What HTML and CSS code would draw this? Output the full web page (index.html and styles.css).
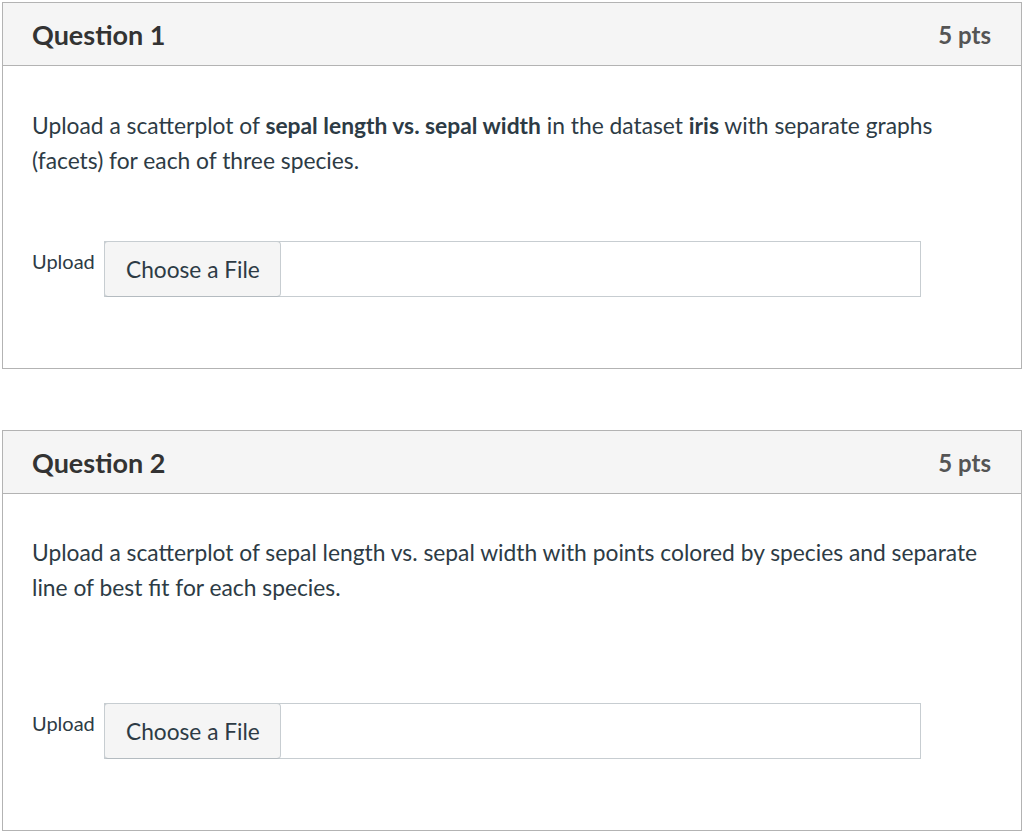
FILE: index.html
```html
<!DOCTYPE html>
<html>
<head>
<meta charset="utf-8">
<link rel="stylesheet" href="styles.css">
</head>
<body>
<div class="page">
  <div class="card">
    <div class="card-header">
      <span class="title">Question 1</span>
      <span class="pts">5 pts</span>
    </div>
    <div class="card-body">
      <p class="question">Upload a scatterplot of <strong>sepal length vs. sepal width</strong> in the dataset <strong>iris</strong> with separate graphs (facets) for each of three species.</p>
      <div class="upload-row">
        <span class="upload-label">Upload</span>
        <div class="file-input">
          <span class="file-btn">Choose a File</span>
        </div>
      </div>
    </div>
  </div>
  <div class="card card-2">
    <div class="card-header">
      <span class="title">Question 2</span>
      <span class="pts">5 pts</span>
    </div>
    <div class="card-body body-2">
      <p class="question">Upload a scatterplot of sepal length vs. sepal width with points colored by species and separate line of best fit for each species.</p>
      <div class="upload-row">
        <span class="upload-label">Upload</span>
        <div class="file-input">
          <span class="file-btn">Choose a File</span>
        </div>
      </div>
    </div>
  </div>
</div>
</body>
</html>
```
FILE: styles.css
```css
html, body {
  margin: 0;
  padding: 0;
  background: #ffffff;
}
body {
  font-family: Lato, "Open Sans", "Liberation Sans", sans-serif;
  color: #2d3b45;
}
.page {
  padding: 2px 2px 0 2px;
}
.card {
  border: 1px solid #b3b3b3;
  background: #fff;
}
.card-2 {
  margin-top: 61px;
}
.card-header {
  height: 62px;
  background: #f5f5f5;
  border-bottom: 1px solid #b3b3b3;
  display: flex;
  align-items: center;
  justify-content: space-between;
  padding: 0 30px 0 29px;
}
.title {
  font-size: 27px;
  font-weight: 700;
  color: #333333;
}
.pts {
  font-size: 24px;
  font-weight: 700;
  color: #555555;
}
.card-body {
  padding: 42px 29px 71px 29px;
}
.question {
  margin: 0;
  font-size: 22.8px;
  line-height: 35px;
  color: #2d3b45;
}
.question strong {
  font-weight: 700;
  line-height: 1;
}
.upload-row {
  display: flex;
  align-items: flex-start;
  margin-top: 63px;
}
.body-2 .upload-row {
  margin-top: 98px;
}
.body-2 {
  padding-top: 41px;
}
.upload-label {
  font-size: 20px;
  line-height: 24px;
  margin-top: 8px;
  width: 72px;
  flex: none;
  color: #2d3b45;
}
.file-input {
  width: 815px;
  height: 54px;
  border: 1px solid #c7cdd1;
  display: flex;
  align-items: stretch;
}
.file-btn {
  display: flex;
  align-items: center;
  margin: -1px 0 -1px -1px;
  padding: 0 20px 0 21px;
  background: #f5f5f5;
  border: 1px solid #c7cdd1;
  border-bottom-color: #b4bbc0;
  border-radius: 4px;
  font-size: 22.7px;
  color: #2d3b45;
}
```
